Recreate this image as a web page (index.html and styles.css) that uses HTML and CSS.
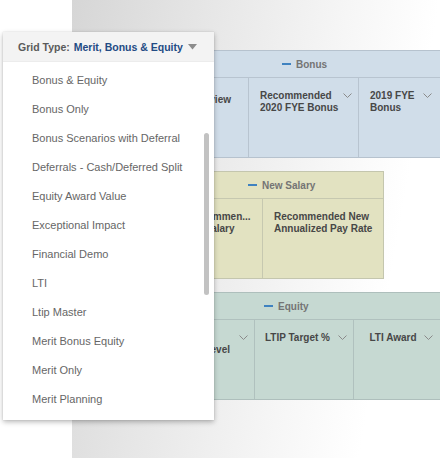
FILE: index.html
```html
<!DOCTYPE html>
<html lang="en">
<head>
<meta charset="utf-8">
<title>Grid Type</title>
<link rel="stylesheet" href="styles.css">
</head>
<body>
<div class="page">
  <div class="stage">
    <section class="card card-bonus">
      <div class="card-head head-bonus"><span class="minus"></span>Bonus</div>
      <div class="card-body cols-bonus">
        <div class="cell cell-review">Last Review</div>
        <div class="cell cell-hd">
          <span class="hd-text">Recommended<br>2020 FYE Bonus</span>
          <svg class="chev" width="9" height="5" viewBox="0 0 9 5"><polyline points="0.5,0.5 4.5,4.5 8.5,0.5" fill="none" stroke="#8a8a8a" stroke-width="1"/></svg>
        </div>
        <div class="cell cell-hd cell-last">
          <span class="hd-text">2019 FYE<br>Bonus</span>
          <svg class="chev" width="9" height="5" viewBox="0 0 9 5"><polyline points="0.5,0.5 4.5,4.5 8.5,0.5" fill="none" stroke="#8a8a8a" stroke-width="1"/></svg>
        </div>
      </div>
    </section>

    <section class="card card-salary">
      <div class="card-head head-salary"><span class="minus"></span>New Salary</div>
      <div class="card-body cols-salary">
        <div class="cell"></div>
        <div class="cell cell-center"><span class="hd-text">Recommen...<br>Salary</span></div>
        <div class="cell cell-hd"><span class="hd-text">Recommended New<br>Annualized Pay Rate</span></div>
      </div>
    </section>

    <section class="card card-equity">
      <div class="card-head head-equity"><span class="minus"></span>Equity</div>
      <div class="card-body cols-equity">
        <div class="cell"></div>
        <div class="cell cell-hd">
          <span class="hd-text">Equity<br>Grant Level</span>
          <svg class="chev" width="9" height="5" viewBox="0 0 9 5"><polyline points="0.5,0.5 4.5,4.5 8.5,0.5" fill="none" stroke="#8a8a8a" stroke-width="1"/></svg>
        </div>
        <div class="cell cell-eq">
          <span class="hd-text eq-text">LTIP Target %</span>
          <svg class="chev" width="9" height="5" viewBox="0 0 9 5"><polyline points="0.5,0.5 4.5,4.5 8.5,0.5" fill="none" stroke="#8a8a8a" stroke-width="1"/></svg>
        </div>
        <div class="cell cell-eq cell-eq-last">
          <span class="hd-text eq-text">LTI Award</span>
          <svg class="chev" width="9" height="5" viewBox="0 0 9 5"><polyline points="0.5,0.5 4.5,4.5 8.5,0.5" fill="none" stroke="#8a8a8a" stroke-width="1"/></svg>
        </div>
      </div>
    </section>
  </div>

  <div class="dropdown">
    <div class="dd-head">
      <span class="dd-label">Grid Type:</span>
      <span class="dd-value">Merit, Bonus &amp; Equity</span>
      <svg class="caret" width="9" height="6" viewBox="0 0 9 6"><polygon points="0,0 9,0 4.5,5.5" fill="#8c8c8c"/></svg>
    </div>
    <ul class="dd-list">
      <li>Bonus &amp; Equity</li>
      <li>Bonus Only</li>
      <li>Bonus Scenarios with Deferral</li>
      <li>Deferrals - Cash/Deferred Split</li>
      <li>Equity Award Value</li>
      <li>Exceptional Impact</li>
      <li>Financial Demo</li>
      <li>LTI</li>
      <li>Ltip Master</li>
      <li>Merit Bonus Equity</li>
      <li>Merit Only</li>
      <li>Merit Planning</li>
    </ul>
    <div class="scroll-thumb"></div>
  </div>
</div>
</body>
</html>
```

FILE: styles.css
```css
* { box-sizing: border-box; }

html, body {
  margin: 0;
  padding: 0;
  background: #ffffff;
}

body {
  font-family: "Liberation Sans", Arial, Helvetica, sans-serif;
}

.page {
  position: relative;
  width: 440px;
  height: 458px;
  overflow: hidden;
  display: flex;
  background: #ffffff;
}

.stage {
  margin-left: 72px;
  flex: 1;
  height: 458px;
  padding-top: 50px;
  overflow: hidden;
  background: linear-gradient(100deg, #d6d6d6 0%, #e6e6e6 30%, #f6f6f6 62%, #ffffff 82%);
}

/* ---------- cards ---------- */
.card {
  margin-left: 18px;
  border: 1px solid rgba(90, 100, 110, 0.22);
  display: flex;
  flex-direction: column;
}

.card + .card { margin-top: 13px; }

.card-bonus { width: 352px; background: #d0dde9; }
.card-salary { width: 294px; background: #e2e2c1; }
.card-equity { width: 352px; background: #c6d9d2; }

.card-head {
  height: 27px;
  border-bottom: 1px solid rgba(90, 100, 110, 0.2);
  display: flex;
  align-items: center;
  font-size: 10px;
  font-weight: bold;
  color: #747474;
}

.head-bonus { padding-left: 191px; }
.head-salary { padding-left: 157px; }
.head-equity { padding-left: 173px; }

.minus {
  display: inline-block;
  width: 9px;
  height: 2px;
  background: #3f82c0;
  margin-right: 5px;
}

.card-body {
  height: 79px;
  display: grid;
}

.cols-bonus { grid-template-columns: 157px 110px 1fr; }
.cols-salary { grid-template-columns: 85px 86px 1fr; }
.cols-equity { grid-template-columns: 72px 91px 99px 1fr; }

.cell {
  font-size: 10px;
  font-weight: bold;
  line-height: 12px;
  color: #474747;
}

.cell + .cell {
  border-left: 1px solid rgba(90, 100, 110, 0.2);
}

.hd-text { display: block; }

.cell-review {
  text-align: right;
  padding: 16px 17px 0 0;
}

.cell-hd {
  display: flex;
  justify-content: space-between;
  align-items: flex-start;
  padding: 12px 6px 0 11px;
}

.cell-last { padding-right: 9px; }

.cell-center {
  text-align: center;
  padding: 12px 0 0 0;
}

.chev {
  flex: none;
  margin-top: 3px;
}

.cell-eq {
  display: flex;
  align-items: flex-start;
  padding: 12px 6px 0 8px;
}

.eq-text {
  flex: 1;
  text-align: center;
}

.cell-eq .chev { margin-left: 6px; }
.cell-eq-last { padding: 12px 8px 0 14px; }

/* ---------- dropdown (overlay menu) ---------- */
.dropdown {
  position: absolute;
  left: 3px;
  top: 32px;
  width: 211px;
  height: 388px;
  background: #ffffff;
  box-shadow: 0 2px 5px rgba(0, 0, 0, 0.28), 0 0 1px rgba(0, 0, 0, 0.15);
}

.dd-head {
  height: 30px;
  padding-left: 15px;
  display: flex;
  align-items: center;
  background: #f3f3f3;
  border-bottom: 1px solid #ececec;
  font-size: 10.5px;
  font-weight: bold;
  white-space: nowrap;
}

.dd-label { color: #5a5a5a; margin-right: 4px; }
.dd-value { color: #234b84; }
.caret { margin-left: 5px; }

.dd-list {
  list-style: none;
  margin: 0;
  padding: 4px 0 0 0;
}

.dd-list li {
  height: 29px;
  line-height: 29px;
  padding-left: 29px;
  font-size: 11px;
  color: #666666;
  white-space: nowrap;
}

.scroll-thumb {
  position: absolute;
  left: 201px;
  top: 101px;
  width: 5px;
  height: 162px;
  border-radius: 3px;
  background: #c2c2c2;
}
```
